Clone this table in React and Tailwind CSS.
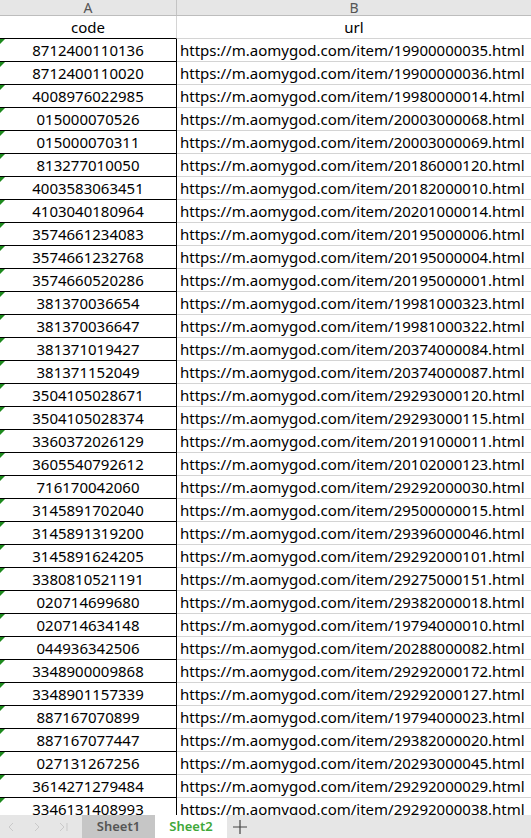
import React from 'react';

const ROWS = [
  ['8712400110136', '19900000035'],
  ['8712400110020', '19900000036'],
  ['4008976022985', '19980000014'],
  ['015000070526', '20003000068'],
  ['015000070311', '20003000069'],
  ['813277010050', '20186000120'],
  ['4003583063451', '20182000010'],
  ['4103040180964', '20201000014'],
  ['3574661234083', '20195000006'],
  ['3574661232768', '20195000004'],
  ['3574660520286', '20195000001'],
  ['381370036654', '19981000323'],
  ['381370036647', '19981000322'],
  ['381371019427', '20374000084'],
  ['381371152049', '20374000087'],
  ['3504105028671', '29293000120'],
  ['3504105028374', '29293000115'],
  ['3360372026129', '20191000011'],
  ['3605540792612', '20102000123'],
  ['716170042060', '29292000030'],
  ['3145891702040', '29500000015'],
  ['3145891319200', '29396000046'],
  ['3145891624205', '29292000101'],
  ['3380810521191', '29275000151'],
  ['020714699680', '29382000018'],
  ['020714634148', '19794000010'],
  ['044936342506', '20288000082'],
  ['3348900009868', '29292000172'],
  ['3348901157339', '29292000127'],
  ['887167070899', '19794000023'],
  ['887167077447', '29382000020'],
  ['027131267256', '20293000045'],
  ['3614271279484', '29292000029'],
  ['3346131408993', '29292000038'],
];

const font = "font-['Noto_Sans',_'Open_Sans',_sans-serif]";

function Arrow({ d }) {
  return (
    <svg width="14" height="14" viewBox="0 0 14 14" fill="none" stroke="#c9c9c9" strokeWidth="1">
      <path d={d} />
    </svg>
  );
}

export default function App() {
  return (
    <div className={`w-[531px] h-[838px] flex flex-col overflow-hidden bg-white text-black ${font}`}>
      {/* column letters */}
      <div className="flex h-[16px] shrink-0 bg-[#e6e6e6] border-b border-[#bdbdbd] text-[14px] leading-[15px] text-[#555]">
        <div className="w-[177px] border-r border-[#c4c4c4] flex justify-center items-center">A</div>
        <div className="flex-1 flex justify-center items-center">B</div>
      </div>

      {/* cells */}
      <div className="flex-1 overflow-hidden text-[15px]">
        <div className="flex h-[23px]">
          <div className="w-[177px] border-r border-[#d4d4d4] border-b border-b-black flex items-center justify-center">code</div>
          <div className="flex-1 border-b border-[#d4d4d4] flex items-center justify-center">url</div>
        </div>
        {ROWS.map(([code, id]) => (
          <div key={code} className="flex h-[23px]">
            <div className="relative w-[177px] border-r border-b border-black flex items-center justify-center">
              <span className="absolute left-0 top-0 w-0 h-0 border-t-[5px] border-t-[#1d8a1d] border-r-[5px] border-r-transparent" />
              {code}
            </div>
            <div className="flex-1 border-b border-[#d4d4d4] flex items-center pl-[3px] whitespace-nowrap">
              https://m.aomygod.com/item/{id}.html
            </div>
          </div>
        ))}
      </div>

      {/* sheet tabs */}
      <div className="flex h-[23px] shrink-0 bg-[#e6e6e6] items-stretch text-[13px]">
        <div className="flex items-center pl-[4px] gap-[12px] w-[82px]">
          <Arrow d="M9 3L5 7l4 4" />
          <Arrow d="M5 3l4 4-4 4" />
          <Arrow d="M4 3l4 4-4 4M11 3v8" />
        </div>
        <div className="w-[73px] bg-[#c6c6c6] flex items-center justify-center font-semibold text-[#555]">Sheet1</div>
        <div className="w-[72px] bg-white flex items-center justify-center font-semibold text-[#3fa83a]">Sheet2</div>
        <div className="w-[26px] flex items-center justify-center">
          <svg width="14" height="14" viewBox="0 0 14 14" stroke="#444" strokeWidth="1.2">
            <path d="M7 0v14M0 7h14" />
          </svg>
        </div>
      </div>
    </div>
  );
}
